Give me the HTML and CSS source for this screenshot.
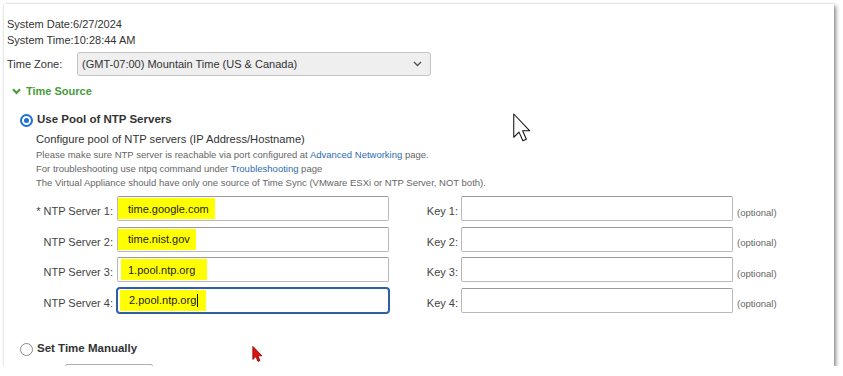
FILE: index.html
```html
<!DOCTYPE html>
<html>
<head>
<meta charset="utf-8">
<link rel="stylesheet" href="styles.css">
</head>
<body>
<div class="card">
  <div class="sysline">System Date:6/27/2024</div>
  <div class="sysline">System Time:10:28:44 AM</div>
  <div class="tz-row">
    <span class="tz-label">Time Zone:</span>
    <div class="select">
      <span>(GMT-07:00) Mountain Time (US &amp; Canada)</span>
      <svg class="select-arrow" width="9" height="6" viewBox="0 0 9 6"><path d="M1 1 L4.5 4.5 L8 1" fill="none" stroke="#555" stroke-width="1.4"/></svg>
    </div>
  </div>
  <div class="section-title">
    <svg class="chev" width="9" height="7" viewBox="0 0 9 7"><path d="M1 1.2 L4.5 5 L8 1.2" fill="none" stroke="#4a9b3c" stroke-width="2.2"/></svg>
    <span>Time Source</span>
  </div>
  <div class="radio-row">
    <span class="radio checked"></span>
    <span class="radio-label">Use Pool of NTP Servers</span>
  </div>
  <div class="configure">Configure pool of NTP servers (IP Address/Hostname)</div>
  <div class="notes">
    <div>Please make sure NTP server is reachable via port configured at <a class="link">Advanced Networking</a> page.</div>
    <div>For troubleshooting use ntpq command under <a class="link">Troubleshooting</a> page</div>
    <div>The Virtual Appliance should have only one source of Time Sync (VMware ESXi or NTP Server, NOT both).</div>
  </div>
  <div class="ntp-grid">
    <label class="lbl">* NTP Server 1:</label>
    <div class="field"><span class="hl">time.google.com</span></div>
    <label class="lbl">Key 1:</label>
    <div class="field"></div>
    <span class="opt">(optional)</span>

    <label class="lbl">NTP Server 2:</label>
    <div class="field"><span class="hl">time.nist.gov</span></div>
    <label class="lbl">Key 2:</label>
    <div class="field"></div>
    <span class="opt">(optional)</span>

    <label class="lbl">NTP Server 3:</label>
    <div class="field"><span class="hl hl-wide">1.pool.ntp.org</span></div>
    <label class="lbl">Key 3:</label>
    <div class="field"></div>
    <span class="opt">(optional)</span>

    <label class="lbl">NTP Server 4:</label>
    <div class="field focused"><span class="hl hl-caret">2.pool.ntp.org<span class="caret"></span></span></div>
    <label class="lbl">Key 4:</label>
    <div class="field"></div>
    <span class="opt">(optional)</span>
  </div>
  <div class="radio-row manual">
    <span class="radio"></span>
    <span class="radio-label">Set Time Manually</span>
  </div>
  <div class="partial-input"></div>

  <svg class="cursor-white" width="18" height="29" viewBox="0 0 12 19"><path d="M0.5 0.5 L0.5 16 L4 12.6 L6.6 18.3 L8.9 17.3 L6.4 11.7 L11.2 11.7 Z" fill="#fff" stroke="#111" stroke-width="0.7" stroke-linejoin="round"/></svg>
  <svg class="cursor-red" width="11" height="16" viewBox="0 0 12 19"><path d="M0.5 0.5 L0.5 16 L4 12.6 L6.6 18.3 L8.9 17.3 L6.4 11.7 L11.2 11.7 Z" fill="#e01010" stroke="#8a0000" stroke-width="1" stroke-linejoin="round"/></svg>
</div>
</body>
</html>
```
FILE: styles.css
```css
html, body {
  margin: 0;
  padding: 0;
  background: #ffffff;
}
body {
  font-family: "Liberation Sans", Arial, sans-serif;
  font-size: 11px;
  color: #333;
}
.card {
  position: relative;
  margin: 4px 0 0 4px;
  width: 830px;
  height: 362px;
  box-sizing: border-box;
  padding: 12px 0 0 3px;
  background: #fff;
  overflow: hidden;
  box-shadow: 2px 2px 4px rgba(0,0,0,0.45), 0 0 1px rgba(0,0,0,0.25);
}
.sysline {
  line-height: 16px;
  height: 16px;
}
.tz-row {
  display: flex;
  align-items: center;
  margin-top: 4px;
  height: 24px;
}
.tz-label {
  width: 70px;
}
.select {
  width: 354px;
  height: 24px;
  box-sizing: border-box;
  border: 1px solid #c4c4c4;
  border-radius: 3px;
  background: #efefef;
  display: flex;
  align-items: center;
  justify-content: space-between;
  padding: 0 8px 0 4px;
  color: #333;
}
.select-arrow {
  display: block;
}
.section-title {
  margin-top: 7px;
  height: 16px;
  line-height: 16px;
  padding-left: 5px;
  display: flex;
  align-items: center;
  gap: 5px;
  color: #4a9b3c;
  font-weight: bold;
}
.chev {
  display: block;
}
.radio-row {
  margin-top: 12px;
  height: 16px;
  display: flex;
  align-items: center;
  padding-left: 13px;
  gap: 4px;
}
.radio-label {
  font-weight: bold;
  font-size: 11.5px;
  color: #333;
  line-height: 16px;
}
.radio {
  width: 13px;
  height: 13px;
  box-sizing: border-box;
  border-radius: 50%;
  border: 1px solid #8a8a8a;
  background: #fff;
  position: relative;
  margin-top: 2px;
}
.radio.checked {
  border: 2px solid #1f6fd6;
}
.radio.checked::after {
  content: "";
  position: absolute;
  left: 2px;
  top: 2px;
  width: 5px;
  height: 5px;
  border-radius: 50%;
  background: #1f6fd6;
}
.configure {
  margin-top: 5px;
  padding-left: 29px;
  line-height: 14px;
  font-size: 11.2px;
  color: #333;
}
.notes {
  margin-top: 2px;
  padding-left: 29px;
  font-size: 9.5px;
  line-height: 14px;
  color: #666;
}
.link {
  color: #2e6db0;
  text-decoration: none;
}
.ntp-grid {
  margin-top: 6px;
  display: grid;
  grid-template-columns: 110px 272px 72px 272px auto;
  grid-auto-rows: 25px;
  row-gap: 5.5px;
  align-items: center;
}
.lbl {
  text-align: right;
  padding-right: 4px;
  padding-top: 5px;
  color: #444;
}
.lbl:nth-child(5n+3) {
  padding-right: 3px;
}
.field {
  height: 25px;
  box-sizing: border-box;
  border: 1px solid #b9b9b9;
  border-top-color: #9a9a9a;
  border-radius: 2px;
  background: #fff;
  display: flex;
  align-items: center;
  color: #333;
}
.field.focused {
  border-color: #2d5fa3;
  box-shadow: 0 0 0 1px #2d5fa3;
  border-radius: 3px;
}
.hl {
  display: inline-flex;
  align-items: center;
  height: 21px;
  background: #ffff00;
  padding: 0 6px 0 10px;
  color: #222;
}
.hl-wide {
  margin-left: 3px;
  padding: 0 12px 0 7px;
}
.hl-caret {
  margin-left: 2px;
  padding: 0 8px 0 9px;
}
.caret {
  display: inline-block;
  width: 1px;
  height: 13px;
  background: #111;
  margin-left: 1px;
}
.opt {
  padding-left: 4px;
  padding-top: 7px;
  font-size: 9.5px;
  color: #666;
}
.radio-row.manual {
  margin-top: 27.5px;
}
.partial-input {
  margin: 8px 0 0 58px;
  width: 88px;
  height: 22px;
  box-sizing: border-box;
  border: 1px solid #b0b0b0;
  border-radius: 2px;
}
.cursor-white {
  position: absolute;
  left: 509px;
  top: 109px;
}
.cursor-red {
  position: absolute;
  left: 248px;
  top: 342px;
}
```
